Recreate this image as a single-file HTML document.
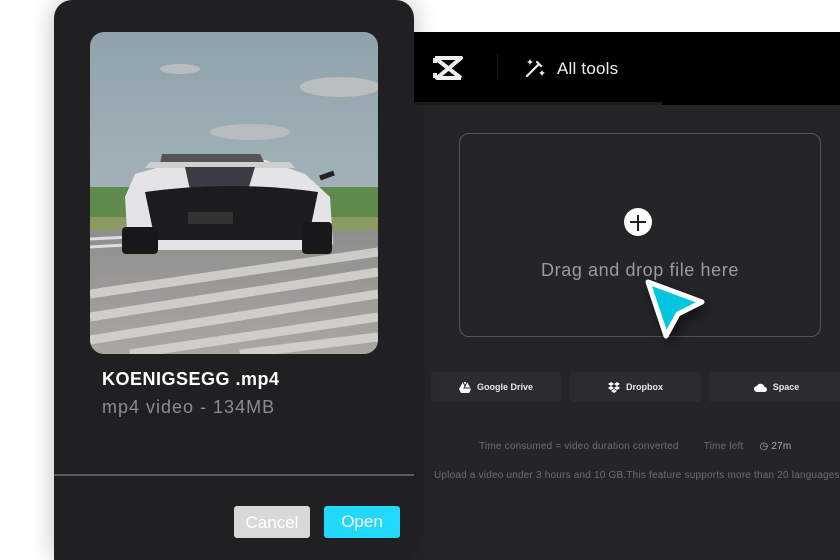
<!DOCTYPE html>
<html><head><meta charset="utf-8"><style>
*{margin:0;padding:0;box-sizing:border-box}
html,body{width:840px;height:560px;overflow:hidden}
body{background:#fff;font-family:"Liberation Sans",sans-serif;position:relative}
.app{position:absolute;left:410px;top:32px;width:430px;height:528px;background:#242527}
.top{position:absolute;left:0;top:0;width:430px;height:73px;background:#000}
.topline{position:absolute;left:0;top:70px;width:252px;height:3px;background:#1c1c1e}
.drop{position:absolute;left:49px;top:101px;width:362px;height:204px;border:1.5px solid #555659;border-radius:10px}
.btn{position:absolute;top:340px;height:30px;background:#2a2d30;border-radius:4px;color:#e8e8e8;font-size:9px;font-weight:bold;display:flex;align-items:center;justify-content:center;gap:6px}
.dlg{position:absolute;left:54px;top:0;width:360px;height:560px;background:#202022;border-radius:18px 18px 0 0;box-shadow:0 0 24px rgba(0,0,0,.25)}
.img{position:absolute;left:36px;top:32px;width:288px;height:322px;border-radius:14px;overflow:hidden}
</style></head><body>
<div class="app">
 <div class="top">
  <svg style="position:absolute;left:22px;top:23px" width="34" height="27" viewBox="0 0 34 27"><path d="M3 3 H29 L5 23 H29 M3 3 V8 M3 23 V18 M3 3 L29 23" fill="none" stroke="#eee" stroke-width="4" stroke-linejoin="round"/></svg>
  <div style="position:absolute;left:87px;top:22px;width:1px;height:26px;background:#1a1a1a"></div>
  <svg style="position:absolute;left:114px;top:25px" width="22" height="22" viewBox="0 0 22 22"><path d="M3 19 L15 7 M13 5 L17 9" stroke="#eee" stroke-width="2.2" fill="none" stroke-linecap="round"/><path d="M6 2 l1 2 2 1 -2 1 -1 2 -1-2 -2-1 2-1z M18 13 l1 2 2 1-2 1-1 2-1-2-2-1 2-1z" fill="#eee"/></svg>
  <div style="position:absolute;left:147px;top:27px;color:#eee;font-size:17px;letter-spacing:0.2px">All tools</div>
  <div class="topline"></div>
 </div>
 <div class="drop">
  <div style="position:absolute;left:164px;top:74px;width:28px;height:28px;border-radius:50%;background:#fff"></div>
  <div style="position:absolute;left:170px;top:87px;width:16px;height:2.4px;background:#222"></div>
  <div style="position:absolute;left:176.8px;top:80.5px;width:2.4px;height:16px;background:#222"></div>
  <div style="position:absolute;left:0;width:100%;top:126px;text-align:center;color:#9a9b9d;font-size:18px;letter-spacing:0.6px">Drag and drop file here</div>
 </div>
 <svg style="position:absolute;left:230px;top:242px;filter:drop-shadow(4px 6px 6px rgba(0,0,0,.5))" width="70" height="70" viewBox="0 0 70 70"><path d="M8 8 L62 28 L38 40 L26 62 Z" fill="#02c5de" stroke="#fff" stroke-width="5" stroke-linejoin="round"/></svg>
 <div class="btn" style="left:21px;width:130px"><svg width="12" height="11" viewBox="0 0 12 11"><path d="M4 0h4l4 7-2 4H2L0 7z" fill="#fff"/><path d="M4 0 L6 4 M8 0 L5 6 H12" stroke="#2a2d30" fill="none"/></svg>Google Drive</div>
 <div class="btn" style="left:160px;width:131px"><svg width="12" height="11" viewBox="0 0 12 11"><path d="M3 0l3 2-3 2-3-2zM9 0l3 2-3 2-3-2zM3 4l3 2-3 2-3-2zM9 4l3 2-3 2-3-2zM3 9l3-2 3 2-3 2z" fill="#fff"/></svg>Dropbox</div>
 <div class="btn" style="left:299px;width:135px"><svg width="13" height="10" viewBox="0 0 13 10"><path d="M3 10a3 3 0 0 1 0-6a4 4 0 0 1 7.5 1a2.5 2.5 0 0 1 0 5z" fill="#fff"/></svg>Space</div>
 <div style="position:absolute;left:69px;top:409px;color:#6d6e70;font-size:10px;letter-spacing:0.2px;white-space:nowrap">Time consumed = video duration converted<span style="margin-left:25px">Time left</span><span style="margin-left:16px;color:#aaa">◷ 27m</span></div>
 <div style="position:absolute;left:24px;top:438px;color:#6d6e70;font-size:10px;letter-spacing:0.2px;white-space:nowrap">Upload a video under 3 hours and 10 GB.This feature supports more than 20 languages. C</div>
</div>
<div class="dlg">
 <div class="img">
  <svg width="288" height="322" viewBox="0 0 288 322">
   <defs>
    <linearGradient id="sky" x1="0" y1="0" x2="0" y2="1"><stop offset="0" stop-color="#8fa2ab"/><stop offset="1" stop-color="#b7c2c6"/></linearGradient>
    <linearGradient id="road" x1="0" y1="0" x2="0" y2="1"><stop offset="0" stop-color="#8e8e8c"/><stop offset="1" stop-color="#a9a7a2"/></linearGradient>
   </defs>
   <rect width="288" height="322" fill="url(#sky)"/>
   <ellipse cx="90" cy="37" rx="20" ry="5" fill="#c9c8c4" opacity=".7"/>
   <ellipse cx="250" cy="55" rx="40" ry="10" fill="#c9c8c4" opacity=".7"/>
   <ellipse cx="160" cy="100" rx="40" ry="8" fill="#c9c8c4" opacity=".6"/>
   <rect y="155" width="288" height="45" fill="#5f8a4c"/>
   <rect y="185" width="288" height="15" fill="#8a9a60"/>
   <rect y="198" width="288" height="124" fill="url(#road)"/>
   <g stroke="#d8d6d0" stroke-width="9" opacity=".85">
    <path d="M0 262 L288 220"/><path d="M0 285 L288 240"/><path d="M0 308 L288 262"/><path d="M40 322 L288 285"/><path d="M150 322 L288 305"/>
   </g>
   <path d="M0 207 L40 205 M0 215 L35 213" stroke="#ddd" stroke-width="3"/>
   <g>
    <path d="M38 215 L35 165 L45 142 L95 128 L175 128 L215 142 L240 165 L243 212 L230 218 L45 218 Z" fill="#e4e4e6"/>
    <path d="M72 122 L170 122 L175 132 L70 132 Z" fill="#555"/>
    <path d="M60 130 L200 130 L205 136 L55 136Z" fill="#cfcfcf"/>
    <path d="M95 135 L165 135 L158 158 L100 158Z" fill="#3a3d44"/>
    <path d="M55 160 Q140 148 228 160 L218 208 L65 208 Z" fill="#1c1c1e"/>
    <rect x="98" y="180" width="45" height="12" fill="#333"/>
    <rect x="32" y="195" width="36" height="27" rx="4" fill="#18181a"/>
    <rect x="212" y="190" width="30" height="32" rx="4" fill="#18181a"/>
    <path d="M230 146 L244 141" stroke="#222" stroke-width="5"/>
   </g>
  </svg>
 </div>
 <div style="position:absolute;left:48px;top:369px;color:#fff;font-size:18px;font-weight:bold;letter-spacing:0.5px">KOENIGSEGG .mp4</div>
 <div style="position:absolute;left:48px;top:397px;color:#8c8c8e;font-size:18px;letter-spacing:1px">mp4 video - 134MB</div>
 <div style="position:absolute;left:0;top:474px;width:360px;height:2px;background:#5c5c5e"></div>
 <div style="position:absolute;left:180px;top:506px;width:76px;height:32px;background:#d9d9d9;border-radius:3px;color:#fff;font-size:17px;text-align:center;line-height:34px">Cancel</div>
 <div style="position:absolute;left:270px;top:506px;width:76px;height:32px;background:#22d8ff;border-radius:3px;color:#fff;font-size:17px;text-align:center;line-height:32px">Open</div>
</div>
</body></html>
